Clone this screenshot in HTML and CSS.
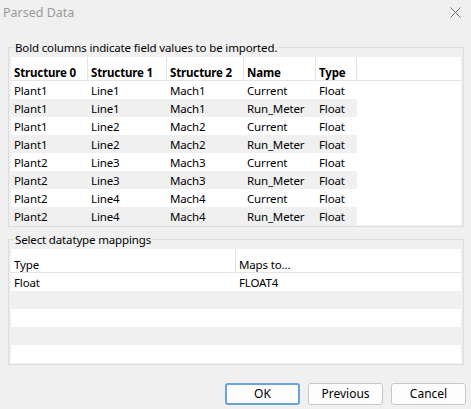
FILE: index.html
```html
<!DOCTYPE html>
<html>
<head>
<meta charset="utf-8">
<link rel="stylesheet" href="styles.css">
</head>
<body>
<div class="dialog">
  <div class="titlebar">
    <span class="title">Parsed Data</span>
    <svg class="close" width="11" height="11" viewBox="0 0 11 11"><path d="M0.5 0.5 L10.5 10.5 M10.5 0.5 L0.5 10.5" stroke="#6e6e6e" stroke-width="1" fill="none"/></svg>
  </div>
  <fieldset class="group group-data">
    <legend>Bold columns indicate field values to be imported.</legend>
    <div class="grid">
      <div class="row head">
        <div class="c c0">Structure 0</div><div class="c c1">Structure 1</div><div class="c c2">Structure 2</div><div class="c c3">Name</div><div class="c c4">Type</div><div class="fill"></div>
      </div>
      <div class="row"><div class="c c0">Plant1</div><div class="c c1">Line1</div><div class="c c2">Mach1</div><div class="c c3">Current</div><div class="c c4">Float</div></div>
      <div class="row alt"><div class="c c0">Plant1</div><div class="c c1">Line1</div><div class="c c2">Mach1</div><div class="c c3">Run_Meter</div><div class="c c4">Float</div></div>
      <div class="row"><div class="c c0">Plant1</div><div class="c c1">Line2</div><div class="c c2">Mach2</div><div class="c c3">Current</div><div class="c c4">Float</div></div>
      <div class="row alt"><div class="c c0">Plant1</div><div class="c c1">Line2</div><div class="c c2">Mach2</div><div class="c c3">Run_Meter</div><div class="c c4">Float</div></div>
      <div class="row"><div class="c c0">Plant2</div><div class="c c1">Line3</div><div class="c c2">Mach3</div><div class="c c3">Current</div><div class="c c4">Float</div></div>
      <div class="row alt"><div class="c c0">Plant2</div><div class="c c1">Line3</div><div class="c c2">Mach3</div><div class="c c3">Run_Meter</div><div class="c c4">Float</div></div>
      <div class="row"><div class="c c0">Plant2</div><div class="c c1">Line4</div><div class="c c2">Mach4</div><div class="c c3">Current</div><div class="c c4">Float</div></div>
      <div class="row alt"><div class="c c0">Plant2</div><div class="c c1">Line4</div><div class="c c2">Mach4</div><div class="c c3">Run_Meter</div><div class="c c4">Float</div></div>
    </div>
  </fieldset>
  <fieldset class="group group-map">
    <legend>Select datatype mappings</legend>
    <div class="grid">
      <div class="row head"><div class="c m0">Type</div><div class="c m1">Maps to...</div></div>
      <div class="row"><div class="c m0">Float</div><div class="c m1">FLOAT4</div></div>
      <div class="row alt full"></div>
      <div class="row full"></div>
      <div class="row alt full"></div>
      <div class="row full"></div>
    </div>
  </fieldset>
  <div class="buttons">
    <button class="btn default">OK</button>
    <button class="btn">Previous</button>
    <button class="btn">Cancel</button>
  </div>
</div>
</body>
</html>
```

FILE: styles.css
```css
html, body {
  margin: 0;
  padding: 0;
  background: #f0f0f0;
}
body {
  font-family: "Noto Sans", "Open Sans", sans-serif;
  font-size: 11.5px;
  letter-spacing: -0.15px;
  color: #000;
  width: 471px;
  height: 409px;
  overflow: hidden;
}
.dialog {
  display: flex;
  flex-direction: column;
}
.titlebar {
  height: 39px;
  display: flex;
  align-items: flex-start;
  justify-content: space-between;
  padding: 4px 10px 0 3px;
  box-sizing: border-box;
}
.title {
  color: #9a9a9a;
  font-size: 12.5px;
  letter-spacing: 0;
  line-height: 18px;
}
.close {
  margin-top: 3px;
}
.group {
  margin: 0 7px 0 8px;
  border: 1px solid #dcdcdc;
  padding: 2px 2px 1px 2px;
  min-width: 0;
}
.group legend {
  padding: 0 1px;
  margin-left: 3px;
  line-height: 17px;
  height: 16px;
  color: #000;
}
.group-map {
  margin-top: 4px;
}
.grid {
  background: #fff;
  display: flex;
  flex-direction: column;
}
.row {
  display: flex;
  height: 18px;
  line-height: 18px;
  white-space: nowrap;
}
.row .c {
  box-sizing: border-box;
  padding-top: 1px;
  height: 18px;
  line-height: 18px;
}
.row.head {
  height: 24px;
  box-sizing: border-box;
  border-bottom: 1px solid #e5e5e5;
  font-weight: bold;
}
.group-map .row.head {
  font-weight: normal;
}
.row.head .c {
  height: 23px;
  padding-top: 8px;
  line-height: 16px;
  border-right: 1px solid #e5e5e5;
}
.row.alt .c, .row.alt.full {
  background: #f0f0f0;
}
.c {
  padding-left: 3px;
  overflow: hidden;
}
.c0 { width: 77px; }
.c1 { width: 79px; }
.c2 { width: 77px; }
.c3 { width: 72px; }
.c4 { width: 41px; }
.fill { flex: 1; }
.m0 { width: 225px; }
.m1 { flex: 1; }
.group-map .row.head .m1 { border-right: none; }
.buttons {
  display: flex;
  justify-content: flex-end;
  gap: 8px;
  margin-top: 18px;
  padding-right: 5px;
}
.btn {
  width: 75px;
  height: 22px;
  box-sizing: border-box;
  font-family: inherit;
  font-size: 12px;
  letter-spacing: 0;
  color: #000;
  background: #fdfdfd;
  border: 1px solid #c8c8c8;
  border-radius: 3px;
  padding: 0;
  line-height: 18px;
}
.btn.default {
  border: 2px solid #6aa3dc;
}
```
